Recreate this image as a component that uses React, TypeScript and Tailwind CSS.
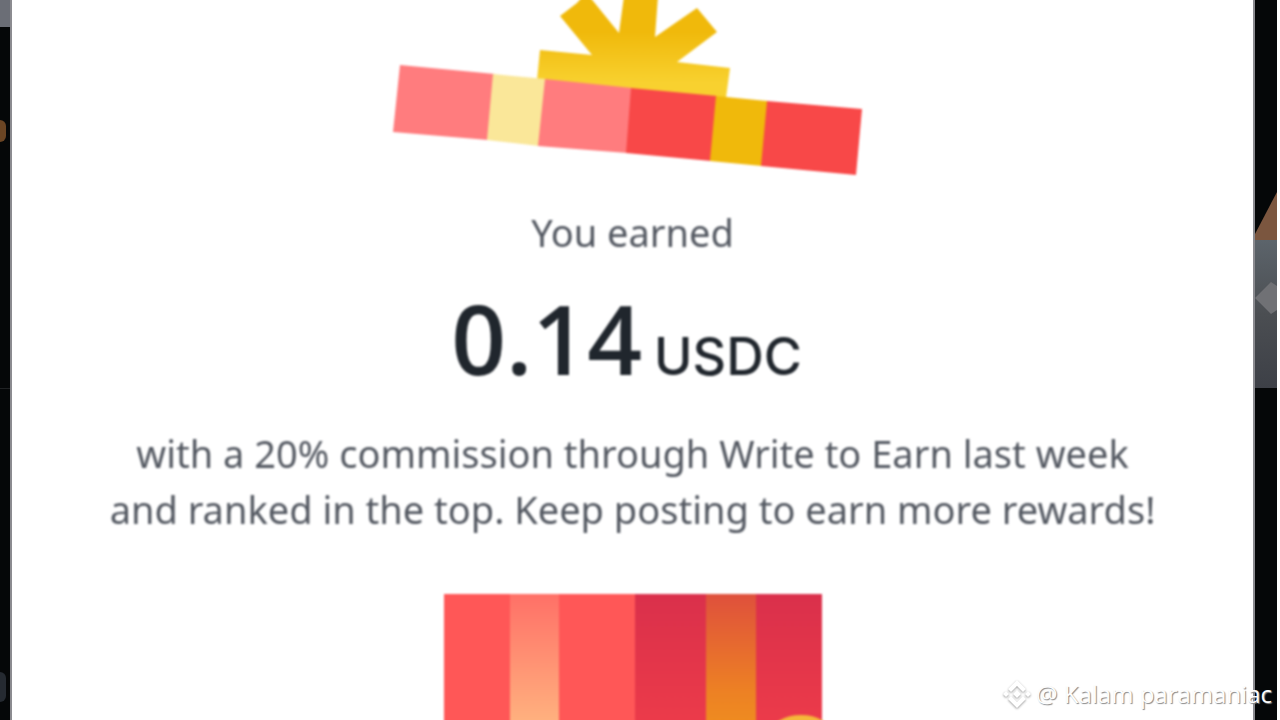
function GiftLid() {
  return (
    <svg viewBox="393 0 480 180" className="h-[180px] w-[480px] shrink-0 overflow-visible" aria-hidden="true">
      <defs>
        <linearGradient id="bow" x1="0" y1="0" x2="0" y2="1">
          <stop offset="0" stopColor="#f0b90b" />
          <stop offset="0.35" stopColor="#f0b90b" />
          <stop offset="0.85" stopColor="#f8d12f" />
          <stop offset="1" stopColor="#f8d12f" />
        </linearGradient>
      </defs>
      <path
        d="M540 50 592 55 560 16 577 3 583 -4 589 -4 619 33 624 -4 658 -4 655 37 697 8 717 32 677 62 730 68 726 98 537 80Z"
        fill="url(#bow)"
      />
      <path d="M400 65 495 74 488 140 393 132Z" fill="#ff7c7e" />
      <path d="M493 74 546 79 539 146 487 140Z" fill="#fae799" />
      <path d="M545 79 632 88 627 153 538 146Z" fill="#ff7c7e" />
      <path d="M631 88 717 96 711 161 626 153Z" fill="#f84848" />
      <path d="M716 96 768 101 762 166 710 161Z" fill="#f0b90b" />
      <path d="M767 101 862 109 856 175 761 166Z" fill="#f84848" />
    </svg>
  );
}

function GiftBox() {
  return (
    <svg viewBox="443 594 380 126" className="block h-[126px] w-[380px] shrink-0 overflow-visible" aria-hidden="true">
      <defs>
        <linearGradient id="side" x1="0" y1="0" x2="0" y2="1">
          <stop offset="0" stopColor="#da304b" />
          <stop offset="1" stopColor="#ec3b4a" />
        </linearGradient>
        <linearGradient id="paleRibbon" x1="0" y1="0" x2="0" y2="1">
          <stop offset="0" stopColor="#ff7067" />
          <stop offset="1" stopColor="#ffb27f" />
        </linearGradient>
        <linearGradient id="goldRibbon" x1="0" y1="0" x2="0" y2="1">
          <stop offset="0" stopColor="#df503c" />
          <stop offset="0.75" stopColor="#ed8124" />
          <stop offset="1" stopColor="#ef8c20" />
        </linearGradient>
      </defs>
      <path d="M444 594H636V724H444Z" fill="#ff5757" />
      <path d="M510 594H559V724H510Z" fill="url(#paleRibbon)" />
      <path d="M635 594H822V724H635Z" fill="url(#side)" />
      <path d="M706 594H756V724H706Z" fill="url(#goldRibbon)" />
      <ellipse cx="801" cy="733" rx="30" ry="18" fill="#f5b83a" />
    </svg>
  );
}

function Watermark() {
  return (
    <div className="absolute right-2 bottom-2 flex items-center gap-1 font-['Open_Sans','Noto_Sans',sans-serif] text-2xl leading-[36px] text-[#fdfdfd] [text-shadow:1px_1px_1px_#888]">
      <svg viewBox="0 0 30 30" className="size-[30px] drop-shadow-[0_1px_1px_#999]" fill="#fff" aria-hidden="true">
        <path d="m15 1 9 9-3 3-6-6-6 6-3-3zM15 29l9-9-3-3-6 6-6-6-3 3zM4 12l3 3-3 3-3-3zM26 12l3 3-3 3-3-3zM15 11l4 4-4 4-4-4z" />
      </svg>
      <span>@ Kalam paramaniac</span>
    </div>
  );
}

export default function App() {
  return (
    <div className="relative flex min-h-screen overflow-hidden bg-white font-['Noto_Sans',sans-serif]">
      <div className="flex w-3 shrink-0 flex-col border-r-2 border-[#8b8b90] bg-[#050708]">
        <div className="h-[27px] bg-[#6b6e76]" />
        <div className="mt-[93px] h-[22px] w-1.5 rounded-r-full bg-[#6b4524]" />
        <div className="mt-[246px] h-px bg-[#202224]" />
        <div className="mt-auto mb-[18px] h-[30px] w-1.5 rounded-r-full bg-[#252a31]" />
      </div>

      <main className="flex flex-1 flex-col items-center text-center text-[#535861] blur-[1px]">
        <GiftLid />
        <p className="mt-7 text-[38px] leading-[48px]">You earned</p>
        <h1 className="mt-7 flex items-baseline gap-3 pr-3 leading-[108px] text-[#20262d]">
          <span className="font-['Open_Sans',sans-serif] text-[96px] font-semibold">0.14</span>
          <span className="font-[Inter,sans-serif] text-[52px] font-medium">USDC</span>
        </h1>
        <p className="mt-3.5 text-[38px] leading-[56px]">
          with a 20% commission through Write to Earn last week
          <br />
          and ranked in the top. Keep posting to earn more rewards!
        </p>
        <div className="mt-auto">
          <GiftBox />
        </div>
      </main>

      <div className="mr-[3px] flex w-6 shrink-0 flex-col border-l-2 border-[#8b8b90] bg-[#050708]">
        <svg viewBox="0 0 22 48" className="mt-48 h-12 w-full" preserveAspectRatio="none" aria-hidden="true">
          <path d="M22 0V48H0V42Z" fill="#7b563f" />
        </svg>
        <div className="flex h-[148px] flex-col bg-linear-to-b from-[#5c646b] via-[#4b4e52] to-[#3d4047] pt-[38px]">
          <svg viewBox="0 0 22 36" className="h-9 w-full" aria-hidden="true">
            <path d="M0 20 16 4 22 8V32L16 36Z" fill="#707175" />
          </svg>
        </div>
      </div>

      <Watermark />
    </div>
  );
}
